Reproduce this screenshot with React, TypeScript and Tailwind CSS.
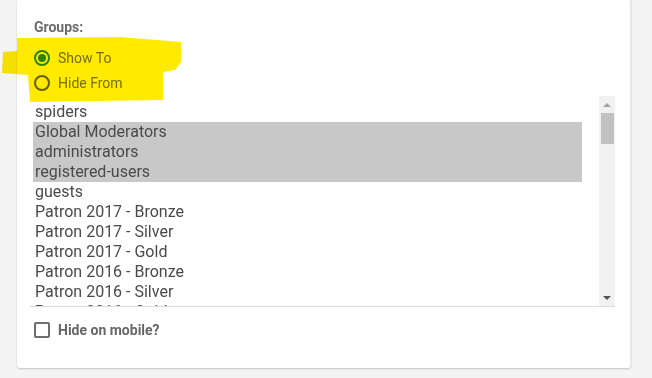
import React from "react";

const groups = [
  "spiders",
  "Global Moderators",
  "administrators",
  "registered-users",
  "guests",
  "Patron 2017 - Bronze",
  "Patron 2017 - Silver",
  "Patron 2017 - Gold",
  "Patron 2016 - Bronze",
  "Patron 2016 - Silver",
  "Patron 2016 - Gold",
];

const selected = ["Global Moderators", "administrators", "registered-users"];

export default function App() {
  return (
    <div
      className="w-[652px] h-[378px] bg-[#f4f4f4] overflow-hidden relative"
      style={{ fontFamily: "Roboto, 'Liberation Sans', sans-serif" }}
    >
      {/* Card */}
      <div className="ml-[17px] w-[614px] h-[368px] bg-white rounded-b-[3px] shadow-[0_1px_2px_rgba(0,0,0,0.2)] border-r border-[#e6e6e6] pt-[19px] pl-[17px] flex flex-col">
        <div className="text-[14px] font-bold text-[#6b6b6b] leading-[16px]">Groups:</div>

        {/* Radios */}
        <div className="flex flex-col mt-[15px] gap-[9px]">
          <label className="flex items-center gap-[8px] h-[16px]">
            <span className="w-[16px] h-[16px] rounded-full border-2 border-[#2d8f1e] flex items-center justify-center">
              <span className="w-[8px] h-[8px] rounded-full bg-[#2d8f1e]" />
            </span>
            <span className="text-[14px] text-[#777]">Show To</span>
          </label>
          <label className="flex items-center gap-[8px] h-[16px]">
            <span className="w-[16px] h-[16px] rounded-full border-2 border-[#666]" />
            <span className="text-[14px] text-[#777]">Hide From</span>
          </label>
        </div>

        {/* Multi select list */}
        <div className="ml-[-4px] mt-[5px] w-[585px] h-[211px] flex border-b border-[#dcdcdc] overflow-hidden">
          <div className="flex-1 pt-[6px] pl-[3px] pr-[17px] overflow-hidden">
            {groups.map((g) => (
              <div
                key={g}
                className={`h-[20px] leading-[20px] text-[16px] text-[#4a4a4a] pl-[2px] whitespace-nowrap ${
                  selected.includes(g) ? "bg-[#c8c8c8]" : ""
                }`}
              >
                {g}
              </div>
            ))}
          </div>
          {/* Scrollbar */}
          <div className="w-[16px] h-full bg-[#f1f1f1] flex flex-col items-center">
            <div className="h-[17px] flex items-center justify-center">
              <div className="w-0 h-0 border-l-[4px] border-r-[4px] border-b-[4px] border-l-transparent border-r-transparent border-b-[#a3a3a3]" />
            </div>
            <div className="w-[13px] h-[31px] bg-[#c1c1c1]" />
            <div className="flex-1" />
            <div className="h-[17px] flex items-center justify-center">
              <div className="w-0 h-0 border-l-[4px] border-r-[4px] border-t-[4px] border-l-transparent border-r-transparent border-t-[#505050]" />
            </div>
          </div>
        </div>

        {/* Checkbox */}
        <label className="flex items-center gap-[8px] mt-[15px] h-[16px]">
          <span className="w-[16px] h-[16px] rounded-[2px] border-2 border-[#6e6e6e]" />
          <span className="text-[14px] font-bold text-[#666]">Hide on mobile?</span>
        </label>
      </div>

      {/* Highlighter marks */}
      <svg
        className="absolute left-0 top-0 mix-blend-multiply pointer-events-none"
        width="200"
        height="110"
        viewBox="0 0 200 110"
      >
        <path
          d="M17 38 L120 37 L181 42 L181 62 L175 70 L163 72 L163 100 L30 102 L28 75 L2 73 L3 52 L17 51 Z"
          fill="#ffea00"
        />
      </svg>
    </div>
  );
}
